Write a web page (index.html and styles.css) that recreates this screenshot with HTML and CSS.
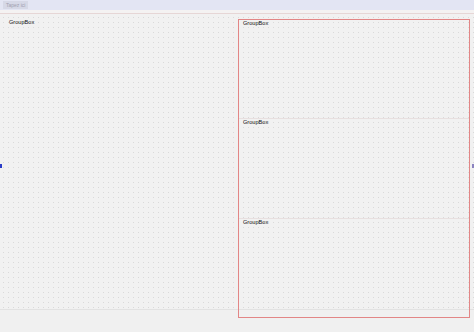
FILE: index.html
```html
<!DOCTYPE html>
<html>
<head>
<meta charset="utf-8">
<link rel="stylesheet" href="styles.css">
</head>
<body>
<div class="window">
  <div class="menubar"><span class="menu-item">Tapez ici</span></div>
  <div class="sep"></div>
  <div class="form">
    <div class="col-left">
      <div class="gb"><span class="gb-title">GroupBox</span></div>
    </div>
    <div class="col-right">
      <div class="gb gb-r"><span class="gb-title">GroupBox</span></div>
      <div class="gb gb-r"><span class="gb-title">GroupBox</span></div>
      <div class="gb gb-r"><span class="gb-title">GroupBox</span></div>
    </div>
    <span class="handle handle-l"></span>
    <span class="handle handle-r"></span>
  </div>
  <div class="statusbar"></div>
</div>
</body>
</html>
```
FILE: styles.css
```css
html, body {
  margin: 0;
  padding: 0;
}
body {
  width: 474px;
  height: 332px;
  background: #f0f0f0;
  font-family: "Liberation Sans", "DejaVu Sans", sans-serif;
  overflow: hidden;
}
.window {
  display: flex;
  flex-direction: column;
  height: 332px;
}
.menubar {
  height: 10px;
  background: #e3e5f3;
  display: flex;
  align-items: stretch;
  padding-left: 3px;
}
.menu-item {
  font-size: 5px;
  line-height: 8px;
  color: #a0a0b0;
  background: #d6d8e6;
  padding: 0 3px;
  margin-top: 1px;
  height: 8px;
}
.sep {
  height: 3px;
  background: #f4f2f2;
  border-bottom: 1px solid #e6d6d6;
}
.form {
  position: relative;
  height: 296px;
  display: flex;
  gap: 4px;
  padding: 5px 4px 0 3px;
  background-color: #f1f1f1;
  background-image: radial-gradient(circle, #d9d9d9 0.6px, transparent 0.8px);
  background-size: 5px 5px;
  background-position: 1px 1px;
  box-sizing: border-box;
  border-bottom: 1px solid #e2e2e2;
}
.col-left {
  flex: 0 0 231px;
  display: flex;
  flex-direction: column;
}
.col-right {
  flex: 1;
  display: flex;
  flex-direction: column;
  border: 1px solid #e28686;
  height: 299px;
  box-sizing: border-box;
}
.gb {
  flex: 1;
  position: relative;
}
.gb-r {
  border-top: 1px solid #e8e0e0;
}
.gb-r:first-child {
  border-top: none;
}
.gb-title {
  display: block;
  font-size: 5.6px;
  line-height: 7px;
  color: #111111;
  padding: 0 0 0 6px;
}
.col-right .gb-title {
  padding-left: 4px;
}
.handle {
  position: absolute;
  top: 150px;
  width: 2px;
  height: 4px;
}
.handle-l {
  left: 0;
  background: #2a3cc8;
}
.handle-r {
  right: 0;
  background: #8c84c0;
}
.statusbar {
  flex: 1;
  background: #f0f0f0;
}
```
